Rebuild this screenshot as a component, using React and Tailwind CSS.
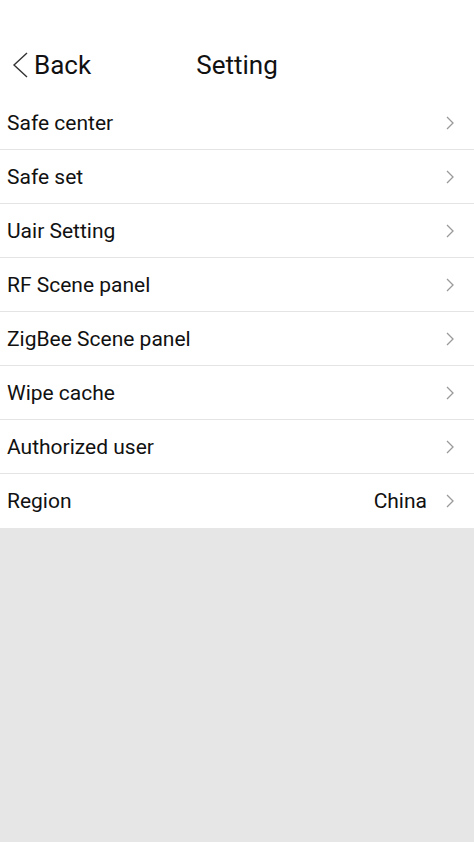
import React from 'react';

const items = [
    { label: 'Safe center' },
    { label: 'Safe set' },
    { label: 'Uair Setting' },
    { label: 'RF Scene panel' },
    { label: 'ZigBee Scene panel' },
    { label: 'Wipe cache' },
    { label: 'Authorized user' },
    { label: 'Region', value: 'China' },
];

const Chevron = () => (
    <svg width="8" height="14" viewBox="0 0 8 14" fill="none" stroke="#9a9a9a" strokeWidth="1.3">
        <path d="M1 1l6 6-6 6" />
    </svg>
);

const App = () => {
    return (
        <div className="w-[474px] h-[842px] bg-[#e6e6e6] flex flex-col text-[#111]" style={{ fontFamily: 'Roboto, "Noto Sans", sans-serif' }}>
            <header className="h-[96px] bg-white relative flex items-center pt-[34px]">
                <div className="flex items-center pl-[12px]">
                    <svg width="16" height="26" viewBox="0 0 16 26" fill="none" stroke="#333" strokeWidth="1.4">
                        <path d="M15 1L2 13l13 12" />
                    </svg>
                    <span className="ml-[6px] text-[26px] leading-none">Back</span>
                </div>
                <span className="absolute left-0 right-0 top-[52px] text-center text-[26px] leading-none">Setting</span>
            </header>
            <ul className="bg-white">
                {items.map((item, i) => (
                    <li key={item.label} className={`h-[54px] flex items-center pl-[7px] pr-[20px] ${i < items.length - 1 ? 'border-b border-[#e4e4e4]' : ''}`}>
                        <span className="flex-1 text-[21px] pt-[2px]">{item.label}</span>
                        {item.value && <span className="text-[21px] pt-[2px] mr-[19px]">{item.value}</span>}
                        <Chevron />
                    </li>
                ))}
            </ul>
        </div>
    );
};

export default App;
